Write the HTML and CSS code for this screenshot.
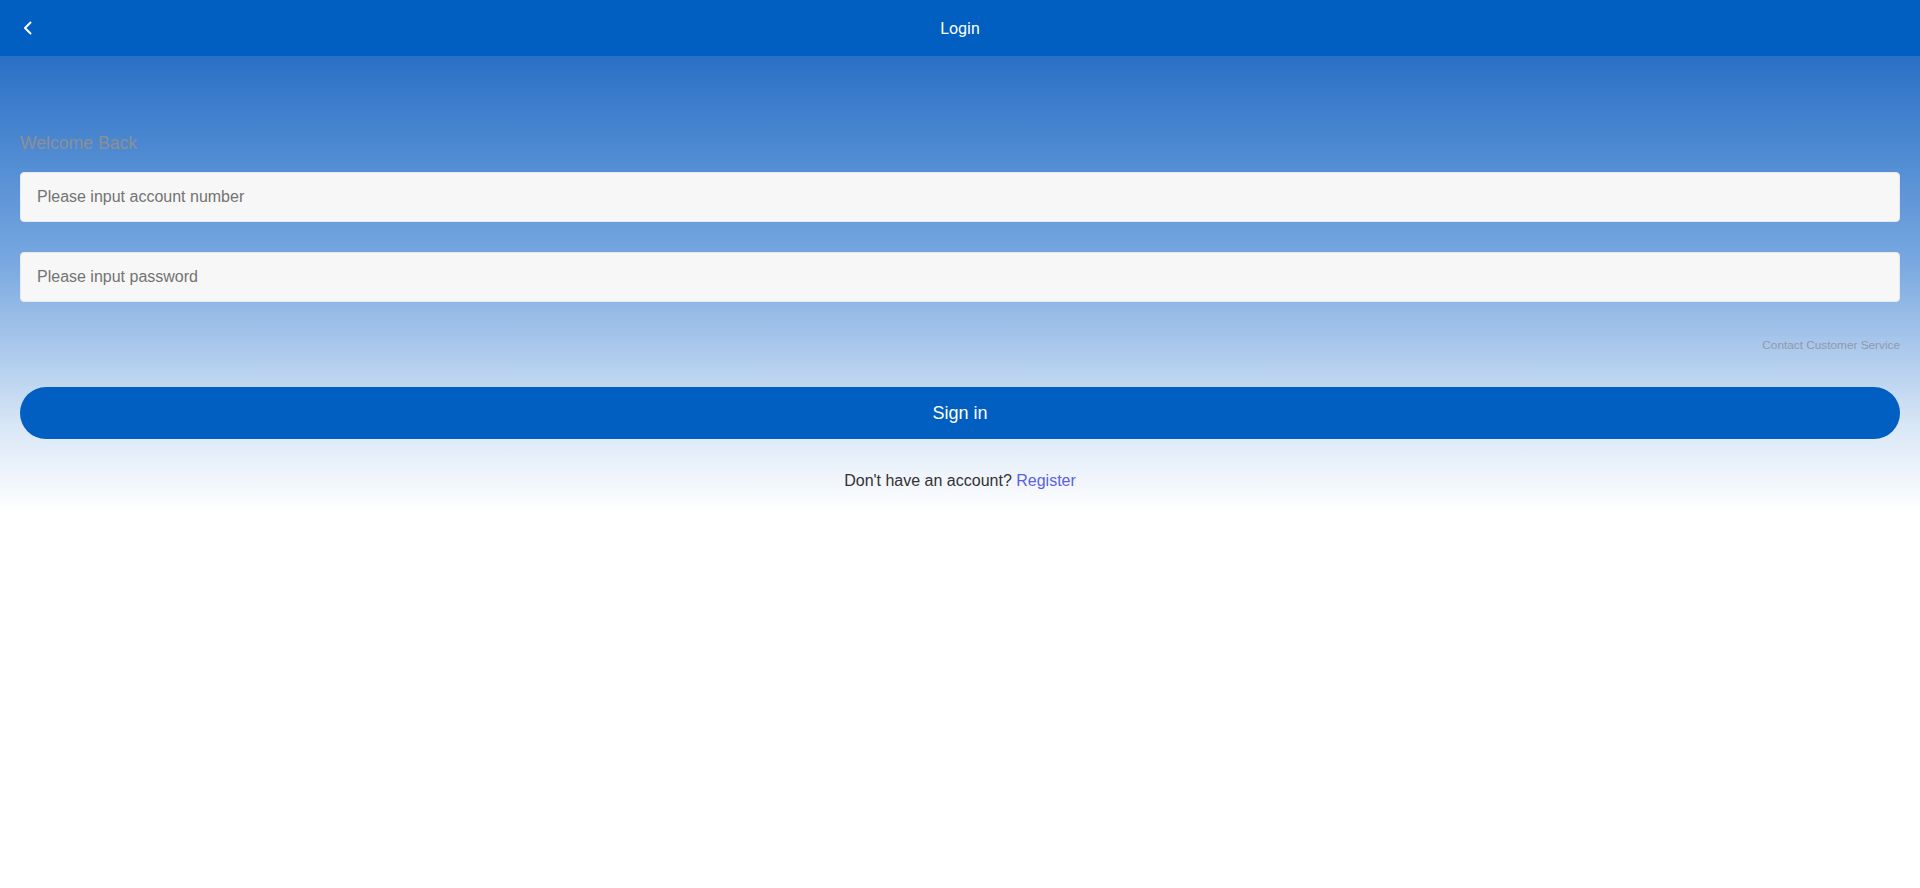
FILE: index.html
```html
<!DOCTYPE html>
<html lang="en">
<head>
    <meta charset="UTF-8">
    <meta name="viewport" content="width=device-width, initial-scale=1.0">
    <title>Login</title>
    <link rel="stylesheet" href="styles.css">
</head>
<body>
    <header class="nav-bar">
        <button class="nav-back" aria-label="Back">
            <svg width="16" height="16" viewBox="0 0 16 16">
                <polyline points="10.5,2.5 5,8 10.5,13.5" fill="none" stroke="#ffffff" stroke-width="2" stroke-linecap="round" stroke-linejoin="round"/>
            </svg>
        </button>
        <div class="nav-title">Login</div>
    </header>

    <main class="login">
        <div class="welcome">Welcome Back</div>

        <form class="login-form" onsubmit="return false;">
            <input class="field" type="text" placeholder="Please input account number">
            <input class="field field-second" type="password" placeholder="Please input password">
            <div class="service">
                <a href="#">Contact Customer Service</a>
            </div>
            <button class="sign-in" type="submit">Sign in</button>
        </form>

        <p class="register">Don't have an account? <a href="#">Register</a></p>
    </main>
</body>
</html>
```

FILE: styles.css
```css
body {
    margin: 0;
    font-family: "Liberation Sans", Arial, sans-serif;
    background: #ffffff;
    color: #323233;
}
.nav-bar {
    position: relative;
    height: 56px;
    background: #005fc0;
    display: flex;
    align-items: center;
    justify-content: center;
}
.nav-back {
    position: absolute;
    left: 20px;
    top: 20px;
    width: 16px;
    height: 16px;
    padding: 0;
    border: none;
    background: none;
    cursor: pointer;
    display: flex;
}
.nav-title {
    font-family: Roboto, "Liberation Sans", sans-serif;
    font-size: 16px;
    color: #ffffff;
}
.login {
    padding: 75px 20px 22px;
    background: linear-gradient(to bottom, #2a70c6 0%, #78a8e0 45%, #dbe8f7 82%, #ffffff 100%);
}
.welcome {
    font-size: 17.6px;
    line-height: 24px;
    color: #8d8f93;
}
.login-form {
    display: flex;
    flex-direction: column;
    margin-top: 17px;
}
.field {
    box-sizing: border-box;
    height: 50px;
    padding: 0 16px;
    border: 1px solid #e6e9ee;
    border-radius: 4px;
    background: #f7f7f7;
    font-family: inherit;
    font-size: 16px;
    color: #323233;
    outline: none;
}
.field::placeholder {
    color: #737373;
}
.field-second {
    margin-top: 30px;
}
.service {
    margin-top: 35px;
    text-align: right;
    font-size: 11.8px;
    line-height: 16px;
}
.service a {
    color: #8e9aab;
    text-decoration: none;
}
.sign-in {
    margin-top: 34px;
    height: 52px;
    border: none;
    border-radius: 26px;
    background: #005fc0;
    color: #ffffff;
    font-family: inherit;
    font-size: 18px;
    cursor: pointer;
}
.register {
    margin: 32px 0 0;
    text-align: center;
    font-size: 16px;
    line-height: 20px;
    color: #323233;
}
.register a {
    color: #5b5fe2;
    text-decoration: none;
}
```
